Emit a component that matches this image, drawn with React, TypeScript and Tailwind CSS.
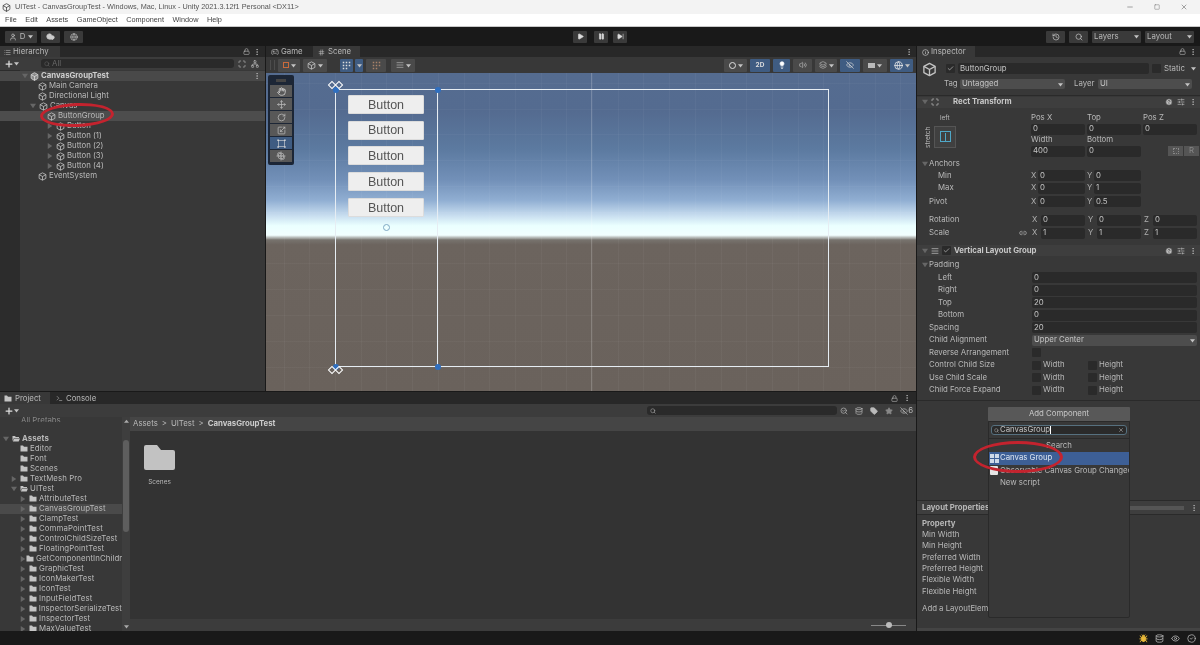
import React from 'react';
import { Hand, Move, RotateCw, Scaling, History, Search, Cloud, Minus, X, Square, Play, Pause, SkipForward, Check, Lock, MoreVertical, Hash, Gamepad2, Info, Plus, Star, Tag, EyeOff, Lightbulb, HelpCircle, SlidersHorizontal, AlignJustify, List, Terminal, Link2, Globe, User, Box, Maximize, Volume2, Layers, CircleCheck, Eye, Bug, Database, Network, SearchCheck } from 'lucide-react';

const Cube = ({ className = 'w-[9px] h-[9px] text-[#c8c8c8]' }: { className?: string }) => (
  <svg viewBox="0 0 16 16" className={`shrink-0 ${className}`} fill="none" stroke="currentColor" strokeWidth="1.4" strokeLinejoin="round">
    <path d="M8 1.5 14 4.6v6.8L8 14.5 2 11.4V4.6Z" />
    <path d="M2 4.6 8 8l6-3.4M8 8v6.5" />
  </svg>
);

const Folder = ({ open = false }: { open?: boolean }) => (
  <svg viewBox="0 0 16 14" className="w-[8px] h-[7px] shrink-0 text-[#c4c4c4]" fill="currentColor">
    {open ? <path d="M1 2h5l1.5 2H14v2H4L1 12Zm3.4 5H16l-2.6 6H1.6Z" /> : <path d="M1 1h5l2 2.4h7V13H1Z" />}
  </svg>
);

const Arrow = ({ open = false, className = '' }: { open?: boolean; className?: string }) => (
  <svg viewBox="0 0 8 8" className={`w-[6px] h-[6px] shrink-0 text-[#666] ${className}`} fill="currentColor">
    {open ? <path d="M0 1h8L4 7Z" /> : <path d="M1 0v8l6-4Z" />}
  </svg>
);

const Drop = ({ className = 'text-[#c4c4c4]' }: { className?: string }) => (
  <svg viewBox="0 0 8 8" className={`w-[5px] h-[5px] shrink-0 ${className}`} fill="currentColor"><path d="M0 2h8L4 7Z" /></svg>
);

// grid of dots used by the snap buttons in the scene toolbar
const SnapGrid = ({ className = 'text-[#ddd]' }: { className?: string }) => (
  <svg viewBox="0 0 12 12" className={`w-[9px] h-[9px] shrink-0 ${className}`} fill="currentColor">
    <path d="M1 1h2v2H1zM5 1h2v2H5zM9 1h2v2H9zM1 5h2v2H1zM5 5h2v2H5zM9 5h2v2H9zM5 9h2v2H5zM1 9h2v2H1z" />
  </svg>
);

const RectTool = ({ className = '' }: { className?: string }) => (
  <svg viewBox="0 0 12 12" className={className} fill="none" stroke="currentColor">
    <path d="M2 2h8v8H2Z" strokeWidth="0.8" />
    <path d="M0.5 0.5h2v2h-2zM9.5 0.5h2v2h-2zM0.5 9.5h2v2h-2zM9.5 9.5h2v2h-2z" fill="currentColor" strokeWidth="0" />
  </svg>
);

const TransformTool = ({ className = '' }: { className?: string }) => (
  <svg viewBox="0 0 12 12" className={className} fill="none" stroke="currentColor" strokeWidth="0.8">
    <circle cx="6" cy="6" r="3.6" />
    <path d="M6 .5v11M.5 6h11" />
    <circle cx="4" cy="4" r="2.2" />
    <circle cx="8" cy="8" r="2.2" />
  </svg>
);

function TreeRow({ label, indent, arrow, open, selected }: { label: string; indent: number; arrow?: boolean; open?: boolean; selected?: boolean }) {
  return (
    <div className={`h-[10px] flex items-center ${selected ? 'bg-[#4d4d4d]' : ''}`} style={{ paddingLeft: indent }}>
      <span className="w-[9px] flex justify-start">{arrow && <Arrow open={open} />}</span>
      <Cube />
      <span className="ml-[2px] whitespace-nowrap">{label}</span>
    </div>
  );
}

function ProjectRow({ label, indent, arrow, open, selected, bold }: { label: string; indent: number; arrow?: boolean; open?: boolean; selected?: boolean; bold?: boolean }) {
  return (
    <div className={`h-[10px] flex items-center overflow-hidden ${selected ? 'bg-[#4a4a4a]' : ''}`} style={{ paddingLeft: indent }}>
      <span className="w-[9px]">{arrow && <Arrow open={open} />}</span>
      <Folder open={open} />
      <span className={`ml-[2px] whitespace-nowrap tracking-[0.1px] ${bold ? 'font-bold' : ''}`}>{label}</span>
    </div>
  );
}

const Field = ({ value, className = 'w-[54px]' }: { value: string; className?: string }) => (
  <div className={`h-[11px] bg-[#2a2a2a] rounded-[2px] pl-[2px] flex items-center text-[#c4c4c4] overflow-hidden ${className}`}>{value}</div>
);

const Box2 = () => <span className="w-[9px] h-[9px] rounded-[1px] bg-[#2a2a2a] shrink-0" />;

function AxisRow({ label, indent = 11, axes, h = 12.5 }: { label: string; indent?: number; axes: [string, string][]; h?: number }) {
  return (
    <div className="flex items-center" style={{ height: h }}>
      <span className="w-[114px] shrink-0" style={{ paddingLeft: indent }}>{label}</span>
      <div className="flex gap-[2px]">
        {axes.map(([a, v]) => (
          <div key={a} className="flex items-center w-[54px]">
            <span className="w-[7px] shrink-0 text-[#b0b0b0]">{a}</span>
            <Field value={v} className="w-[47px]" />
          </div>
        ))}
      </div>
    </div>
  );
}

function ScaleRow({ label, icon, values }: { label: string; icon?: boolean; values: [string, string][] }) {
  return (
    <div className="h-[13px] flex items-center">
      <span className="w-[102px] pl-[12px] shrink-0">{label}</span>
      <span className="w-[12px] shrink-0">{icon && <Link2 className="w-[8px] h-[8px]" />}</span>
      <div className="flex gap-[2px]">
        {values.map(([a, v]) => (
          <div key={a} className="flex items-center w-[54px]">
            <span className="w-[10px] pl-[1px] shrink-0 text-[#b0b0b0]">{a}</span>
            <Field value={v} className="w-[44px]" />
          </div>
        ))}
      </div>
    </div>
  );
}

const FieldRow = ({ label, value, indent = 21 }: { label: string; value: string; indent?: number }) => (
  <div className="h-[12.5px] flex items-center">
    <span className="w-[115px] shrink-0" style={{ paddingLeft: indent }}>{label}</span>
    <Field value={value} className="w-[165px]" />
  </div>
);

const CheckRow = ({ label }: { label: string }) => (
  <div className="h-[12.5px] flex items-center">
    <span className="w-[115px] pl-[12px] shrink-0">{label}</span>
    <Box2 />
    <span className="w-[47px] pl-[2px]">Width</span>
    <Box2 />
    <span className="pl-[2px]">Height</span>
  </div>
);

const HeadIcons = () => (
  <div className="ml-auto flex items-center gap-[4px] pr-[3px] text-[#bbb]">
    <HelpCircle className="w-[8px] h-[8px] fill-[#bbb] text-[#383838]" />
    <SlidersHorizontal className="w-[8px] h-[8px]" />
    <MoreVertical className="w-[8px] h-[8px]" />
  </div>
);

const SceneBtn = ({ children, blue, className = '' }: { children: React.ReactNode; blue?: boolean; className?: string }) => (
  <div className={`h-[13px] rounded-[1px] flex items-center justify-center gap-[2px] ${blue ? 'bg-[#3f5c82]' : 'bg-[#4a4a4a]'} ${className}`}>{children}</div>
);

const Handle = ({ x, y }: { x: number; y: number }) => (
  <span className="absolute w-[6px] h-[6px] rounded-full bg-[#2f6fc0]" style={{ left: x - 3, top: y - 3 }} />
);

export default function App() {
  return (
    <div className="w-[1200px] h-[645px] overflow-hidden relative flex flex-col bg-[#191919] text-[7.8px] leading-none text-[#b8b8b8] font-['Inter','Liberation_Sans',sans-serif] blur-[0.35px]">
      {/* Window chrome */}
      <div className="h-[14px] bg-[#f3f3f3] flex items-center pl-[2px] text-[#555] text-[7.3px] font-['Liberation_Sans',sans-serif]">
        <Box className="w-[9px] h-[9px] text-[#333] mr-[4px]" />
        <span>UITest - CanvasGroupTest - Windows, Mac, Linux - Unity 2021.3.12f1 Personal &lt;DX11&gt;</span>
        <div className="ml-auto flex items-center gap-[20px] pr-[12px] text-[#777]">
          <Minus className="w-[8px] h-[8px]" />
          <Square className="w-[6px] h-[6px]" />
          <X className="w-[8px] h-[8px]" />
        </div>
      </div>
      <div className="h-[13px] bg-white border-b border-[#c8c8c8] flex items-center gap-[8.5px] pl-[5px] text-[#444] text-[7.3px] font-['Liberation_Sans',sans-serif]">
        {['File', 'Edit', 'Assets', 'GameObject', 'Component', 'Window', 'Help'].map(m => <span key={m}>{m}</span>)}
      </div>

      {/* Main toolbar */}
      <div className="h-[19px] flex items-center pl-[5px] bg-[#191919] shrink-0">
        <div className="w-[568px] flex items-center gap-[4px]">
          <div className="h-[12px] w-[32px] bg-[#3a3a3a] rounded-[1px] flex items-center justify-center gap-[3px]">
            <User className="w-[8px] h-[8px] text-[#ccc]" /><span>D</span><Drop />
          </div>
          <div className="h-[12px] w-[19px] bg-[#3a3a3a] rounded-[1px] flex items-center justify-center"><Cloud className="w-[9px] h-[9px] text-[#ccc] fill-[#ccc]" /></div>
          <div className="h-[12px] w-[19px] bg-[#3a3a3a] rounded-[1px] flex items-center justify-center"><Globe className="w-[8px] h-[8px] text-[#bbb]" /></div>
        </div>
        <div className="flex">
          <div className="w-[14px] h-[12px] bg-[#3a3a3a] rounded-[1px] flex items-center justify-center"><Play className="w-[7px] h-[7px] fill-[#ddd] text-[#ddd]" /></div>
          <div className="w-[14px] h-[12px] bg-[#3a3a3a] rounded-[1px] flex items-center justify-center ml-[7px]"><Pause className="w-[7px] h-[7px] fill-[#ddd] text-[#ddd]" /></div>
          <div className="w-[14px] h-[12px] bg-[#3a3a3a] rounded-[1px] flex items-center justify-center ml-[5px]"><SkipForward className="w-[7px] h-[7px] fill-[#ddd] text-[#ddd]" /></div>
        </div>
        <div className="ml-auto flex items-center gap-[4px] pr-[6px]">
          <div className="w-[19px] h-[12px] bg-[#3a3a3a] rounded-[1px] flex items-center justify-center"><History className="w-[8px] h-[8px] text-[#ccc]" /></div>
          <div className="w-[19px] h-[12px] bg-[#3a3a3a] rounded-[1px] flex items-center justify-center"><Search className="w-[8px] h-[8px] text-[#ccc]" /></div>
          <div className="w-[49px] h-[12px] bg-[#3a3a3a] rounded-[1px] flex items-center justify-between px-[2px]"><span>Layers</span><Drop /></div>
          <div className="w-[49px] h-[12px] bg-[#3a3a3a] rounded-[1px] flex items-center justify-between px-[2px]"><span>Layout</span><Drop /></div>
        </div>
      </div>

      {/* Top panels */}
      <div className="h-[345px] flex shrink-0">
        <div className="w-[916px] flex flex-col shrink-0">
          <div className="h-[345px] flex">
            {/* Hierarchy */}
            <div className="w-[265px] flex flex-col bg-[#383838] shrink-0">
              <div className="h-[11px] bg-[#282828] flex">
                <div className="w-[60px] bg-[#383838] flex items-center gap-[2px] pl-[4px] pt-[1px]"><List className="w-[7px] h-[7px]" /><span>Hierarchy</span></div>
                <div className="ml-auto flex items-center gap-[3px] pr-[4px]"><Lock className="w-[7px] h-[7px]" /><MoreVertical className="w-[8px] h-[8px]" /></div>
              </div>
              <div className="h-[13px] bg-[#3c3c3c] flex items-center pl-[4px] pr-[4px]">
                <Plus className="w-[10px] h-[10px] text-[#ddd]" strokeWidth={3} /><Drop />
                <div className="ml-[22px] w-[193px] h-[9px] bg-[#2a2a2a] rounded-[3px] flex items-center pl-[3px] text-[#666]"><Search className="w-[6px] h-[6px] mr-[2px]" />All</div>
                <Maximize className="ml-[4px] w-[8px] h-[8px]" />
                <Network className="ml-[5px] w-[8px] h-[8px]" />
              </div>
              <div className="flex-1 pt-[1px] text-[#b9b9b9] bg-[linear-gradient(90deg,#2c2c2c_20px,#383838_20px)]">
                <div className="h-[10px] flex items-center bg-[#494949] pl-[22px]">
                  <Arrow open />
                  <Box className="w-[9px] h-[9px] ml-[2px] text-[#ddd] fill-[#888]" />
                  <span className="ml-[2px] font-bold text-[#cfcfcf]">CanvasGroupTest</span>
                  <MoreVertical className="ml-auto mr-[4px] w-[8px] h-[8px]" />
                </div>
                <TreeRow label="Main Camera" indent={29} />
                <TreeRow label="Directional Light" indent={29} />
                <TreeRow label="Canvas" indent={30} arrow open />
                <TreeRow label="ButtonGroup" indent={38} selected />
                <TreeRow label="Button" indent={47} arrow />
                <TreeRow label="Button (1)" indent={47} arrow />
                <TreeRow label="Button (2)" indent={47} arrow />
                <TreeRow label="Button (3)" indent={47} arrow />
                <TreeRow label="Button (4)" indent={47} arrow />
                <TreeRow label="EventSystem" indent={29} />
              </div>
            </div>
            <div className="w-[1px] bg-[#191919] shrink-0" />

            {/* Scene */}
            <div className="flex-1 flex flex-col min-w-0">
              <div className="h-[11px] bg-[#282828] flex shrink-0">
                <div className="w-[47px] flex items-center gap-[2px] pl-[5px] pt-[1px]"><Gamepad2 className="w-[8px] h-[8px]" /><span>Game</span></div>
                <div className="w-[47px] bg-[#383838] flex items-center gap-[3px] pl-[5px] pt-[1px]"><Hash className="w-[7px] h-[7px]" /><span>Scene</span></div>
                <div className="ml-auto flex items-center pr-[3px]"><MoreVertical className="w-[8px] h-[8px]" /></div>
              </div>
              <div className="h-[16px] bg-[#383838] flex items-center pl-[4px] gap-[3px] shrink-0">
                <span className="w-[5px] h-[10px] border-x border-[#4d4d4d]" />
                <SceneBtn className="w-[22px]"><span className="w-[6px] h-[6px] border border-[#c96a3c]" /><Drop /></SceneBtn>
                <SceneBtn className="w-[24px]"><Cube /><Drop /></SceneBtn>
                <SceneBtn blue className="w-[13px] ml-[10px]"><SnapGrid /></SceneBtn>
                <SceneBtn blue className="w-[8px] -ml-[1px]"><Drop /></SceneBtn>
                <SceneBtn className="w-[20px]"><SnapGrid className="text-[#a9826a]" /></SceneBtn>
                <SceneBtn className="w-[24px] ml-[2px]"><AlignJustify className="w-[8px] h-[8px]" /><Drop /></SceneBtn>
                <div className="ml-auto flex items-center gap-[3px] pr-[3px]">
                  <SceneBtn className="w-[23px]"><span className="w-[7px] h-[7px] rounded-full border border-[#ddd]" /><Drop /></SceneBtn>
                  <SceneBtn blue className="w-[20px]"><span className="text-[6.5px] font-bold text-[#ddd]">2D</span></SceneBtn>
                  <SceneBtn blue className="w-[17px]"><Lightbulb className="w-[8px] h-[8px] text-white fill-white" /></SceneBtn>
                  <SceneBtn className="w-[19px]"><Volume2 className="w-[8px] h-[8px]" /></SceneBtn>
                  <SceneBtn className="w-[22px]"><Layers className="w-[8px] h-[8px]" /><Drop /></SceneBtn>
                  <SceneBtn blue className="w-[20px]"><EyeOff className="w-[8px] h-[8px] text-[#ddd]" /></SceneBtn>
                  <SceneBtn className="w-[24px]"><span className="w-[7px] h-[5px] bg-[#bbb]" /><Drop /></SceneBtn>
                  <SceneBtn blue className="w-[23px]"><Globe className="w-[9px] h-[9px] text-[#eee]" /><Drop /></SceneBtn>
                </div>
              </div>
              {/* Free canvas: scene view */}
              <div className="flex-1 relative overflow-hidden bg-[linear-gradient(180deg,#556c90_0%,#546b90_12%,#5c7aa0_24%,#7290b8_33.6%,#90aed2_40%,#c5dbee_44.6%,#eaffff_48%,#f2ffff_51%,#77736e_52.5%,#6c645e_54%,#6a625c_100%)]">
                <div className="absolute -left-[8px] -top-[16px] right-0 bottom-0 bg-[repeating-linear-gradient(90deg,rgba(255,255,255,0.035)_0_1px,transparent_1px_25.7px),repeating-linear-gradient(180deg,rgba(255,255,255,0.03)_0_1px,transparent_1px_25.8px)]" />
                <div className="absolute top-0 bottom-0 left-[325px] w-[1px] bg-white/20" />

                <div className="absolute left-[69px] top-[16px] w-[494px] h-[278px] border border-[#e6edf3]" />
                <div className="absolute left-[171px] top-[16px] bottom-[24px] w-[1px] bg-[#e6edf3]" />
                <Handle x={69.5} y={16.5} /><Handle x={171.5} y={16.5} /><Handle x={69.5} y={293.5} /><Handle x={171.5} y={293.5} />
                <span className="absolute left-[63px] top-[9px] w-[6px] h-[6px] rotate-45 border border-white" />
                <span className="absolute left-[70px] top-[9px] w-[6px] h-[6px] rotate-45 border border-white" />
                <span className="absolute left-[63px] top-[294px] w-[6px] h-[6px] rotate-45 border border-white" />
                <span className="absolute left-[70px] top-[294px] w-[6px] h-[6px] rotate-45 border border-white" />

                <div className="absolute left-[82px] top-[22px] flex flex-col gap-[6.7px]">
                  {[0, 1, 2, 3, 4].map(i => (
                    <div key={i} className="w-[76px] h-[19px] bg-[#eeeeee] border border-[#dcdcdc] rounded-[1px] flex items-center justify-center pt-[1px] text-[#555] text-[12.5px] font-['Liberation_Sans',sans-serif]">Button</div>
                  ))}
                </div>
                <span className="absolute left-[116.5px] top-[151px] w-[7px] h-[7px] rounded-full border-[1.5px] border-[#7fa8c4]" />

                <div className="absolute left-[2px] top-[2px] w-[26px] bg-[#1c2636] rounded-[2px] flex flex-col items-center gap-[1px] p-[2px] pt-[4px] pb-[3px]">
                  <span className="w-[10px] h-[3px] mb-[2px] bg-[#444]" />
                  <div className="w-[22px] h-[12px] flex items-center justify-center bg-[#585858]"><Hand className="w-[9px] h-[9px] text-[#ddd]" /></div>
                  <div className="w-[22px] h-[12px] flex items-center justify-center bg-[#585858]"><Move className="w-[9px] h-[9px] text-[#bbb]" /></div>
                  <div className="w-[22px] h-[12px] flex items-center justify-center bg-[#585858]"><RotateCw className="w-[9px] h-[9px] text-[#bbb]" /></div>
                  <div className="w-[22px] h-[12px] flex items-center justify-center bg-[#585858]"><Scaling className="w-[9px] h-[9px] text-[#bbb]" /></div>
                  <div className="w-[22px] h-[12px] flex items-center justify-center bg-[#3f5c82]"><RectTool className="w-[9px] h-[9px] text-[#ddd]" /></div>
                  <div className="w-[22px] h-[12px] flex items-center justify-center bg-[#585858]"><TransformTool className="w-[10px] h-[10px] text-[#bbb]" /></div>
                </div>
              </div>
            </div>
          </div>
        </div>
        <div className="w-[1px] bg-[#191919] shrink-0" />

        {/* Inspector, continues below */}
        <div className="w-[283px] h-[585px] bg-[#383838] shrink-0 flex flex-col">
          <div className="h-[11px] bg-[#282828] flex shrink-0">
            <div className="w-[58px] bg-[#383838] flex items-center gap-[2px] pl-[5px] pt-[1px]"><Info className="w-[7px] h-[7px] text-[#ddd]" /><span>Inspector</span></div>
            <div className="ml-auto flex items-center gap-[3px] pr-[3px]"><Lock className="w-[7px] h-[7px]" /><MoreVertical className="w-[8px] h-[8px]" /></div>
          </div>
          <div className="h-[39px] flex shrink-0 border-b border-[#2a2a2a]">
            <div className="w-[26px] pl-[5px] pt-[5px]"><Cube className="w-[15px] h-[15px] text-[#c4c4c4]" /></div>
            <div className="flex-1 pt-[6px]">
              <div className="h-[11px] flex items-center">
                <span className="w-[9px] h-[9px] ml-[3px] bg-[#2a2a2a] rounded-[1px] flex items-center justify-center"><Check className="w-[7px] h-[7px] text-[#ddd]" /></span>
                <div className="ml-[3px] mr-[3px] w-[191px] h-[11px] bg-[#2a2a2a] rounded-[2px] pl-[2px] flex items-center text-[#c4c4c4]">ButtonGroup</div>
                <Box2 />
                <span className="ml-[3px]">Static</span>
                <Drop className="ml-[6px] text-[#c4c4c4]" />
              </div>
              <div className="h-[11px] flex items-center mt-[4.5px]">
                <span className="w-[17px] pl-[1px]">Tag</span>
                <div className="w-[105px] h-[10px] bg-[#4d4d4d] rounded-[2px] flex items-center justify-between px-[2px] text-[#c4c4c4]"><span>Untagged</span><Drop /></div>
                <span className="ml-[9px] w-[24px]">Layer</span>
                <div className="w-[94px] h-[10px] bg-[#4d4d4d] rounded-[2px] flex items-center justify-between px-[2px] text-[#c4c4c4]"><span>UI</span><Drop /></div>
              </div>
            </div>
          </div>

          {/* Rect Transform */}
          <div className="mt-[0.5px] h-[11px] bg-[#3e3e3e] flex items-center pl-[5px] shrink-0">
            <Arrow open /><Maximize className="ml-[3px] w-[8px] h-[8px] text-[#ccc]" />
            <span className="ml-[14px] font-bold text-[#c8c8c8]">Rect Transform</span>
            <HeadIcons />
          </div>
          <div className="h-[137.5px] shrink-0 pt-[5px]">
            <div className="flex h-[45px]">
              <div className="w-[114px] relative">
                <span className="absolute left-[23px] top-[2px] text-[6.5px]">left</span>
                <span className="absolute left-[1px] top-[21px] text-[6.5px] -rotate-90">stretch</span>
                <div className="absolute left-[17px] top-[13px] w-[22px] h-[22px] border border-[#555] bg-[#404040] flex items-center justify-center">
                  <span className="w-[11px] h-[11px] border border-[#4fa7c7] flex items-center justify-center"><span className="w-[1px] h-[8px] bg-[#4fa7c7]" /></span>
                </div>
              </div>
              <div className="flex flex-col">
                <div className="flex gap-[2px] h-[11px] items-center"><span className="w-[54px]">Pos X</span><span className="w-[54px]">Top</span><span className="w-[54px]">Pos Z</span></div>
                <div className="flex gap-[2px]"><Field value="0" /><Field value="0" /><Field value="0" /></div>
                <div className="flex gap-[2px] h-[11px] items-center"><span className="w-[54px]">Width</span><span className="w-[54px]">Bottom</span></div>
                <div className="flex gap-[2px]">
                  <Field value="400" /><Field value="0" />
                  <div className="ml-[25px] flex gap-[1px]">
                    <span className="w-[15px] h-[10px] bg-[#555] flex items-center justify-center"><span className="w-[6px] h-[6px] border border-dotted border-[#888]" /></span>
                    <span className="w-[15px] h-[10px] bg-[#555] flex items-center justify-center text-[#888]">R</span>
                  </div>
                </div>
              </div>
            </div>
            <div className="h-[11px] mt-[1px] flex items-center pl-[5px] gap-[1px]"><Arrow open /><span>Anchors</span></div>
            <AxisRow label="Min" indent={21} axes={[['X', '0'], ['Y', '0']]} />
            <AxisRow label="Max" indent={21} axes={[['X', '0'], ['Y', '1']]} />
            <AxisRow label="Pivot" indent={12} axes={[['X', '0'], ['Y', '0.5']]} h={14} />
            <div className="h-[5px]" />
            <ScaleRow label="Rotation" values={[['X', '0'], ['Y', '0'], ['Z', '0']]} />
            <ScaleRow label="Scale" icon values={[['X', '1'], ['Y', '1'], ['Z', '1']]} />
          </div>

          {/* Vertical Layout Group */}
          <div className="h-[11px] bg-[#3e3e3e] flex items-center pl-[5px] shrink-0">
            <Arrow open />
            <AlignJustify className="ml-[3px] w-[8px] h-[8px] text-[#ccc]" />
            <span className="ml-[3px] w-[9px] h-[9px] bg-[#2a2a2a] rounded-[1px] flex items-center justify-center"><Check className="w-[7px] h-[7px] text-[#ddd]" /></span>
            <span className="ml-[3px] font-bold text-[#c8c8c8]">Vertical Layout Group</span>
            <HeadIcons />
          </div>
          <div className="pt-[3px] shrink-0 border-b border-[#2a2a2a] pb-[3.5px]">
            <div className="h-[12.5px] flex items-center pl-[5px] gap-[1px]"><Arrow open /><span>Padding</span></div>
            <FieldRow label="Left" value="0" />
            <FieldRow label="Right" value="0" />
            <FieldRow label="Top" value="20" />
            <FieldRow label="Bottom" value="0" />
            <FieldRow label="Spacing" value="20" indent={12} />
            <div className="h-[12.5px] flex items-center">
              <span className="w-[115px] pl-[12px] shrink-0">Child Alignment</span>
              <div className="w-[165px] h-[11px] bg-[#4d4d4d] rounded-[2px] flex items-center justify-between px-[2px] text-[#c4c4c4]"><span>Upper Center</span><Drop /></div>
            </div>
            <div className="h-[12.5px] flex items-center"><span className="w-[115px] pl-[12px] shrink-0">Reverse Arrangement</span><Box2 /></div>
            <CheckRow label="Control Child Size" />
            <CheckRow label="Use Child Scale" />
            <CheckRow label="Child Force Expand" />
          </div>

          <div className="flex-1" />

          {/* Layout Properties preview */}
          <div className="h-[15px] bg-[#3e3e3e] border-y border-[#2a2a2a] flex items-center pl-[5px] shrink-0 font-bold">
            <span>Layout Properties</span>
            <span className="ml-auto mr-[6px] w-[58px] h-[4px] bg-[#555]" />
            <MoreVertical className="mr-[2px] w-[8px] h-[8px]" />
          </div>
          <div className="h-[116px] bg-[#383838] shrink-0 pl-[5px] pt-[3px] border-b-[3px] border-[#444]">
            <div className="h-[11.3px] flex items-center font-bold">Property</div>
            {['Min Width', 'Min Height', 'Preferred Width', 'Preferred Height', 'Flexible Width', 'Flexible Height'].map(p => (
              <div key={p} className="h-[11.3px] flex items-center">{p}</div>
            ))}
            <div className="mt-[6px] h-[11px] flex items-center whitespace-nowrap">Add a LayoutElement</div>
          </div>
        </div>
      </div>

      {/* Project panel */}
      <div className="w-[916px] h-[240px] flex flex-col bg-[#383838] border-t border-[#191919] shrink-0">
        <div className="h-[12px] bg-[#282828] flex shrink-0">
          <div className="w-[50px] bg-[#383838] flex items-center gap-[3px] pl-[4px] pt-[1px]"><Folder /><span>Project</span></div>
          <div className="flex items-center gap-[3px] pl-[6px] pt-[1px]"><Terminal className="w-[7px] h-[7px]" /><span>Console</span></div>
          <div className="ml-auto flex items-center gap-[5px] pr-[5px]"><Lock className="w-[7px] h-[7px]" /><MoreVertical className="w-[8px] h-[8px]" /></div>
        </div>
        <div className="h-[13px] bg-[#3c3c3c] flex items-center pl-[4px] shrink-0">
          <Plus className="w-[10px] h-[10px] text-[#ddd]" strokeWidth={3} /><Drop />
          <div className="ml-auto w-[190px] h-[9px] bg-[#2a2a2a] rounded-[3px] flex items-center pl-[3px]"><Search className="w-[6px] h-[6px]" /></div>
          <div className="flex items-center gap-[7px] pl-[3px] pr-[3px] text-[#bbb]">
            <SearchCheck className="w-[8px] h-[8px]" />
            <Database className="w-[8px] h-[8px]" />
            <Tag className="w-[8px] h-[8px] fill-[#bbb]" />
            <Star className="w-[8px] h-[8px] fill-[#888] text-[#888]" />
            <span className="flex items-center"><EyeOff className="w-[8px] h-[8px]" />6</span>
          </div>
        </div>
        <div className="flex-1 flex min-h-0">
          <div className="w-[122px] overflow-hidden shrink-0 text-[#b9b9b9]">
            <div className="h-[5px] flex items-end pl-[21px] overflow-hidden"><span className="text-[#888] whitespace-nowrap -mb-[3px]">All Prefabs</span></div>
            <div className="h-[11.5px]" />
            <ProjectRow label="Assets" indent={3} arrow open bold />
            <ProjectRow label="Editor" indent={11} />
            <ProjectRow label="Font" indent={11} />
            <ProjectRow label="Scenes" indent={11} />
            <ProjectRow label="TextMesh Pro" indent={11} arrow />
            <ProjectRow label="UITest" indent={11} arrow open />
            {['AttributeTest', 'CanvasGroupTest', 'ClampTest', 'CommaPointTest', 'ControlChildSizeTest', 'FloatingPointTest', 'GetComponentInChildren', 'GraphicTest', 'IconMakerTest', 'IconTest', 'InputFieldTest', 'InspectorSerializeTest', 'InspectorTest', 'MaxValueTest'].map(n => (
              <ProjectRow key={n} label={n} indent={20} arrow selected={n === 'CanvasGroupTest'} />
            ))}
          </div>
          <div className="w-[8px] bg-[#3e3e3e] shrink-0 flex flex-col items-center justify-between py-[2px]">
            <Drop className="rotate-180 text-[#aaa]" />
            <span className="w-[6px] h-[92px] -mt-[76px] bg-[#5e5e5e] rounded-[3px]" />
            <Drop className="text-[#aaa]" />
          </div>
          <div className="flex-1 flex flex-col">
            <div className="h-[14px] bg-[#454545] flex items-center pl-[3px] gap-[4px] shrink-0">
              <span>Assets</span><span>&gt;</span><span>UITest</span><span>&gt;</span><span className="font-bold text-[#ccc]">CanvasGroupTest</span>
            </div>
            <div className="flex-1 bg-[#333333] pl-[14px] pt-[14px]">
              <div className="w-[31px] flex flex-col items-center">
                <svg viewBox="0 0 31 25" className="w-[31px] h-[25px] text-[#c2c2c2]" fill="currentColor"><path d="M2 0h11l4 5h12a2 2 0 0 1 2 2v16a2 2 0 0 1-2 2H2a2 2 0 0 1-2-2V2a2 2 0 0 1 2-2Z" /></svg>
                <span className="mt-[9px] text-[6.5px]">Scenes</span>
              </div>
            </div>
            <div className="h-[12px] bg-[#3c3c3c] flex items-center justify-end pr-[10px] shrink-0">
              <span className="relative w-[35px] h-[1px] bg-[#888] flex items-center justify-center"><span className="w-[6px] h-[6px] rounded-full bg-[#bbb]" /></span>
            </div>
          </div>
        </div>
      </div>

      {/* Status bar */}
      <div className="h-[14px] bg-[#191919] flex items-center justify-end gap-[7px] pr-[4px] shrink-0">
        <Bug className="w-[9px] h-[9px] text-[#e8b93a] fill-[#e8b93a]" />
        <Database className="w-[9px] h-[9px] text-[#bbb]" />
        <Eye className="w-[9px] h-[9px] text-[#bbb]" />
        <CircleCheck className="w-[9px] h-[9px] text-[#bbb]" />
      </div>

      {/* Add Component popup */}
      <div className="absolute left-[988px] top-[407px] w-[142px] h-[14px] bg-[#585858] rounded-[1px] flex items-center justify-center text-[#c8c8c8]">Add Component</div>
      <div className="absolute left-[988px] top-[421px] w-[142px] h-[197px] bg-[#383838] border border-[#2a2a2a] rounded-b-[2px]">
        <div className="mx-[2px] mt-[3px] h-[10px] bg-[#2a2a2a] border border-[#56707f] rounded-[3px] flex items-center pl-[2px] text-[#c4c4c4]">
          <Search className="w-[5px] h-[5px] mr-[1px]" /><span className="border-r border-white">CanvasGroup</span>
          <X className="ml-auto mr-[2px] w-[6px] h-[6px]" />
        </div>
        <div className="h-[14px] mt-[3px] border-t border-[#2a2a2a] flex items-center justify-center">Search</div>
        <div className="h-[12.5px] bg-[#3d5f96] flex items-center pl-[1px] text-[#dde6f2]">
          <svg viewBox="0 0 10 10" className="w-[9px] h-[9px] mr-[1px] text-[#cfd9e8]" fill="currentColor"><path d="M0 0h4.5v4.5H0zM5.5 0H10v4.5H5.5zM0 5.5h4.5V10H0zM5.5 5.5H10V10H5.5z" /></svg>
          <span>Canvas Group</span>
        </div>
        <div className="h-[12.5px] flex items-center pl-[1px] whitespace-nowrap overflow-hidden">
          <span className="w-[8px] h-[9px] mr-[2px] bg-[#e5e5e5] rounded-[1px] shrink-0" />
          <span>Observable Canvas Group Changed T</span>
        </div>
        <div className="h-[12.5px] flex items-center pl-[11px]">New script</div>
      </div>

      {/* Red annotations */}
      <div className="absolute left-[40px] top-[103px] w-[74px] h-[24px] border-[3px] border-[#c4232e] rounded-[50%] -rotate-[2deg]" />
      <div className="absolute left-[973px] top-[441px] w-[90px] h-[32px] border-[3px] border-[#c4232e] rounded-[50%]" />
    </div>
  );
}
